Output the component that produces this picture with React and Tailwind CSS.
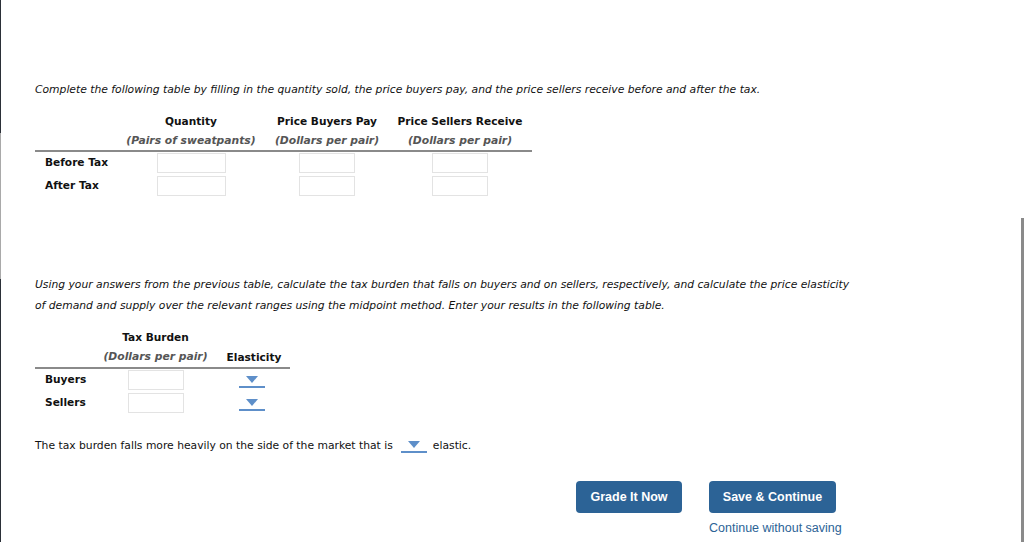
import React from 'react';

const Input = ({ w }) => (
    <div className={`h-[20px] ${w} border border-[#e3e3e3] bg-white mx-auto`} />
);

const Dropdown = () => (
    <div className="inline-flex flex-col items-center w-[26px]">
        <svg width="12" height="7" viewBox="0 0 12 7" className="mt-[4px]">
            <polygon points="0,0 12,0 6,7" fill="#5e8fc9" />
        </svg>
        <div className="w-full h-[2px] bg-[#5e8fc9] mt-[3px]" />
    </div>
);

export default function App() {
    return (
        <div className="relative w-[1024px] h-[542px] bg-white overflow-hidden text-[#111]" style={{ fontFamily: '"DejaVu Sans", Verdana, sans-serif' }}>
            {/* left window edge */}
            <div className="absolute left-0 top-0 bottom-0 w-[1px] bg-[#2b3038]" />
            <div className="absolute left-0 top-[133px] h-[146px] w-[1px] bg-[#a9a9a9]" />
            {/* right scrollbar edge */}
            <div className="absolute right-0 top-[218px] bottom-0 w-[3px] bg-[#8a8a8a]" />

            <div className="pl-[35px] pt-[83px]">
                <p className="italic text-[10.75px] leading-[14px]">
                    Complete the following table by filling in the quantity sold, the price buyers pay, and the price sellers receive before and after the tax.
                </p>

                <table className="mt-[15px] w-[497px] table-fixed border-collapse text-[10.6px]">
                    <colgroup>
                        <col className="w-[87px]" />
                        <col className="w-[138px]" />
                        <col className="w-[134px]" />
                        <col className="w-[138px]" />
                    </colgroup>
                    <thead>
                        <tr className="h-[20px]">
                            <th />
                            <th className="font-bold text-center">Quantity</th>
                            <th className="font-bold text-center">Price Buyers Pay</th>
                            <th className="font-bold text-center pr-[6px]">Price Sellers Receive</th>
                        </tr>
                        <tr className="h-[19px] border-b-[2px] border-[#8a8a8a]">
                            <th />
                            <th className="italic font-bold text-[#555] text-center text-[10.75px] leading-[13px] pb-[2px]">(Pairs of sweatpants)</th>
                            <th className="italic font-bold text-[#555] text-center text-[10.75px] leading-[13px] pb-[2px]">(Dollars per pair)</th>
                            <th className="italic font-bold text-[#555] text-center text-[10.75px] leading-[13px] pb-[2px] pr-[6px]">(Dollars per pair)</th>
                        </tr>
                    </thead>
                    <tbody>
                        {['Before Tax', 'After Tax'].map(r => (
                            <tr key={r} className="h-[23px]">
                                <td className="pl-[10px] font-bold whitespace-nowrap">{r}</td>
                                <td><Input w="w-[69px]" /></td>
                                <td><Input w="w-[56px]" /></td>
                                <td className="pr-[6px]"><Input w="w-[56px]" /></td>
                            </tr>
                        ))}
                    </tbody>
                </table>

                <p className="mt-[77px] italic text-[10.75px] leading-[21px]">
                    Using your answers from the previous table, calculate the tax burden that falls on buyers and on sellers, respectively, and calculate the price elasticity
                    <br />
                    of demand and supply over the relevant ranges using the midpoint method. Enter your results in the following table.
                </p>

                <table className="mt-[12px] w-[255px] table-fixed border-collapse text-[10.6px]">
                    <colgroup>
                        <col className="w-[62px]" />
                        <col className="w-[117px]" />
                        <col className="w-[76px]" />
                    </colgroup>
                    <thead>
                        <tr className="h-[20px]">
                            <th />
                            <th className="font-bold text-center">Tax Burden</th>
                            <th />
                        </tr>
                        <tr className="h-[20px] border-b-[2px] border-[#8a8a8a]">
                            <th />
                            <th className="italic font-bold text-[#555] text-center text-[10.75px] whitespace-nowrap">(Dollars per pair)</th>
                            <th className="font-bold text-center pl-[4px]">Elasticity</th>
                        </tr>
                    </thead>
                    <tbody>
                        {['Buyers', 'Sellers'].map(r => (
                            <tr key={r} className="h-[23px]">
                                <td className="pl-[10px] font-bold">{r}</td>
                                <td><Input w="w-[56px]" /></td>
                                <td className="text-center"><Dropdown /></td>
                            </tr>
                        ))}
                    </tbody>
                </table>

                <div className="mt-[24px] flex items-center text-[10.75px]">
                    <span>The tax burden falls more heavily on the side of the market that is</span>
                    <span className="ml-[8px] mr-[6px] -mt-[2px]"><Dropdown /></span>
                    <span>elastic.</span>
                </div>
            </div>

            <div className="absolute left-[576px] top-[481px] flex gap-[27px]" style={{ fontFamily: '"Liberation Sans", Arial, sans-serif' }}>
                <button className="w-[106px] h-[32px] rounded-[4px] bg-[#2c6396] text-white font-bold text-[12.5px]">Grade It Now</button>
                <div className="flex flex-col items-start">
                    <button className="w-[127px] h-[32px] rounded-[4px] bg-[#2c6396] text-white font-bold text-[12.5px]">Save &amp; Continue</button>
                    <a className="mt-[8px] text-[12.5px] text-[#2c6396] leading-[15px]">Continue without saving</a>
                </div>
            </div>
        </div>
    );
}
